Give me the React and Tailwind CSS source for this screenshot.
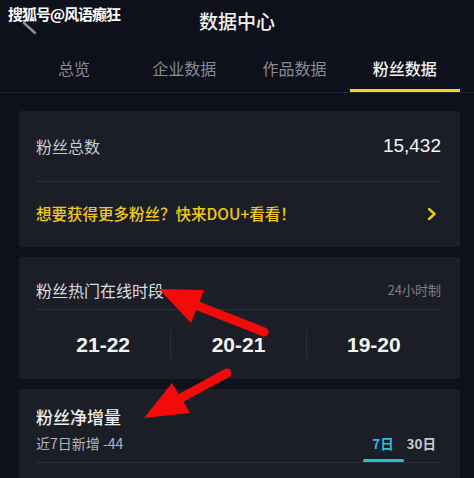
import React from 'react'

const font = { fontFamily: '"Noto Sans CJK SC", "Noto Sans", sans-serif' }

const tabs = ['总览', '企业数据', '作品数据', '粉丝数据']
const hours = ['21-22', '20-21', '19-20']

function Arrow({ tail, tip, left, right }) {
  return (
    <>
      <line x1={tail[0]} y1={tail[1]} x2={(tip[0] + left[0] + right[0]) / 3} y2={(tip[1] + left[1] + right[1]) / 3} stroke="#f50a0a" strokeWidth="9" strokeLinecap="round" />
      <polygon points={`${tip[0]},${tip[1]} ${left[0]},${left[1]} ${right[0]},${right[1]}`} fill="#f50a0a" />
    </>
  )
}

export default function App() {
  return (
    <div className="relative h-[478px] w-[474px] overflow-hidden bg-[#0e101b] text-white" style={font}>
      {/* header */}
      <div className="relative h-[44px]">
        <svg className="absolute left-0 top-0" width="40" height="40" viewBox="0 0 40 40">
          <line x1="24" y1="23" x2="35" y2="33" stroke="#8d8e96" strokeWidth="2.5" strokeLinecap="round" />
        </svg>
        <div className="absolute left-[8px] top-[3px] text-[15px] font-bold leading-[22px] tracking-[-1px] text-white">搜狐号@风语癫狂</div>
        <div className="pt-[8px] text-center text-[19px] font-medium leading-[26px] text-[#f2f2f2]">数据中心</div>
      </div>

      {/* tabs */}
      <div className="border-b border-[#20222c]">
        <div className="ml-[19px] mr-[14px] flex pt-[11px]">
          {tabs.map((t, i) => (
            <div key={t} className="flex flex-1 flex-col items-center">
              <span className={`text-[16px] leading-[26px] ${i === 3 ? 'font-medium text-[#f2f2f2]' : 'text-[#8a8b93]'}`}>{t}</span>
              <div className={`mt-[8px] h-[3px] w-full ${i === 3 ? 'bg-[#f3d21a]' : 'bg-transparent'}`} />
            </div>
          ))}
        </div>
      </div>

      <div className="ml-[19px] mr-[14px] mt-[18px] flex flex-col gap-[10px]">
        {/* total fans */}
        <div className="rounded-[3px] bg-[#1c1e27] pl-[17px] pr-[19px]">
          <div className="flex h-[71px] items-center justify-between border-b border-[#2d2f38]">
            <span className="text-[16px] text-[#c9cacf]">粉丝总数</span>
            <span className="text-[19px] font-medium text-[#f4f4f4]" style={{ fontFamily: '"Liberation Sans", Arial, sans-serif' }}>15,432</span>
          </div>
          <div className="flex h-[65px] items-center justify-between pb-[2px]">
            <span className="text-[15.5px] font-medium text-[#f0c915]">想要获得更多粉丝？快来DOU+看看！</span>
            <svg width="12" height="14" viewBox="0 0 12 14" className="mr-[3px]">
              <path d="M3 2 L8.5 7 L3 12" fill="none" stroke="#f0c915" strokeWidth="2.4" strokeLinecap="round" strokeLinejoin="round" />
            </svg>
          </div>
        </div>

        {/* online hours */}
        <div className="h-[122px] rounded-[3px] bg-[#1c1e27] pl-[17px] pr-[19px]">
          <div className="flex h-[53px] items-end justify-between border-b border-[#2d2f38] pb-[8px]">
            <span className="text-[16px] leading-[22px] text-[#dcdde1]">粉丝热门在线时段</span>
            <span className="text-[13px] leading-[22px] text-[#7d7e86]">24小时制</span>
          </div>
          <div className="flex h-[69px] items-center">
            {hours.map((h, i) => (
              <div key={h} className={`flex h-[29px] flex-1 items-center justify-center ${i > 0 ? 'border-l border-[#2d2f38]' : ''}`}>
                <span className="text-[21px] font-bold text-[#f4f4f4]" style={{ fontFamily: '"Liberation Sans", Arial, sans-serif' }}>{h}</span>
              </div>
            ))}
          </div>
        </div>

        {/* net growth */}
        <div className="h-[100px] rounded-[3px] bg-[#1c1e27] pl-[17px] pr-[19px] pt-[16px]">
          <div className="text-[17px] font-medium leading-[24px] text-[#eeeef0]">粉丝净增量</div>
          <div className="mt-[4px] flex items-end justify-between border-b border-[#2d2f38]">
            <span className="pb-[9px] text-[14px] leading-[20px] text-[#b4b5bb]">近7日新增 -44</span>
            <div className="mr-[5px] flex items-end">
              <div className="flex w-[41px] flex-col items-center">
                <span className="text-[13.5px] font-bold leading-[20px] text-[#25bfd9]">7日</span>
                <div className="mt-[6px] h-[3px] w-full rounded-full bg-[#25bfd9]" />
              </div>
              <span className="ml-[3px] pb-[9px] text-[13.5px] font-bold leading-[20px] text-[#c8c9ce]">30日</span>
            </div>
          </div>
        </div>
      </div>

      {/* annotation arrows */}
      <svg className="pointer-events-none absolute left-0 top-0" width="474" height="478" viewBox="0 0 474 478">
        <Arrow tail={[264, 332]} tip={[159, 289]} left={[204, 290]} right={[191, 323]} />
        <Arrow tail={[227, 373]} tip={[144, 418]} left={[172, 383]} right={[190, 413]} />
      </svg>
    </div>
  )
}
